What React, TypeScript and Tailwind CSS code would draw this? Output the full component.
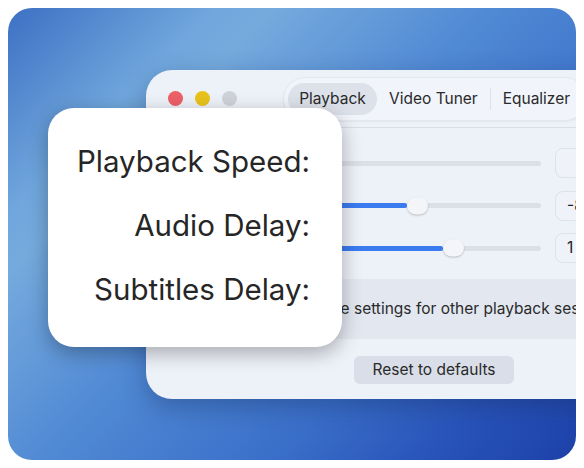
import { FC } from "react";

const font = { fontFamily: "Inter, 'Noto Sans', sans-serif" };

interface RowProps {
    fill: number;
    value: string;
    inset?: boolean;
}

// labels of these rows are shown enlarged in the white callout on top
const SliderRow: FC<RowProps> = ({ fill, value, inset }) => (
    <div className="flex h-[30px] items-center">
        <div className="w-[164px]" />
        <div className="relative flex h-[5px] w-[231px] items-center rounded-full bg-[#dcdfe6]">
            {fill > 0 && <div className="h-[5px] rounded-full bg-[#3a7bf0]" style={{ width: `${fill}px` }} />}
            <div
                className="absolute top-1/2 h-[17px] w-[21px] -translate-y-1/2 rounded-full bg-[#f3f5f9] shadow-[0_1px_2px_rgba(0,0,0,0.22)]"
                style={{ left: `${fill}px` }}
            />
        </div>
        <div
            className={`ml-[14px] flex h-[30px] w-[72px] items-center overflow-hidden whitespace-nowrap rounded-lg border border-[#dde1e8] bg-[#eff2f8] text-[15.5px] text-[#222] ${
                inset ? "pl-[30px]" : "pl-[11px]"
            }`}
        >
            {value}
        </div>
    </div>
);

const App: FC = () => {
    return (
        <div className="h-[468px] w-[584px] bg-white p-2" style={font}>
            <div className="relative h-[452px] w-[568px] overflow-hidden rounded-[24px] bg-[linear-gradient(135deg,#3d70c4_0%,#6fa6dc_20%,#75aadd_26%,#5089d4_48%,#3a6fc9_70%,#2954ba_85%,#1c41a8_100%)]">
                {/* app window */}
                <div className="absolute left-[138px] top-[62px] flex h-[329px] w-[576px] flex-col rounded-[26px] bg-[#edf1f8] shadow-[0_8px_24px_rgba(20,40,90,0.35)]">
                    <div className="flex h-[58px] shrink-0 items-center border-b border-[#d8dde6] pl-[22px]">
                        <div className="flex gap-[12px]">
                            <span className="size-[15px] rounded-full bg-[#ec6066]" />
                            <span className="size-[15px] rounded-full bg-[#e8c21c]" />
                            <span className="size-[15px] rounded-full bg-[#cfd2d7]" />
                        </div>
                        <div className="ml-[46px] flex h-[44px] items-center rounded-full border border-[#e3e7ef] bg-[#f1f4fa] px-[4px] text-[15.5px] text-[#2a2a2a] shadow-[0_1px_2px_rgba(0,0,0,0.05)]">
                            <div className="flex h-[32px] w-[89px] items-center justify-center rounded-full bg-[#dde1e9]">Playback</div>
                            <div className="whitespace-nowrap px-3">Video Tuner</div>
                            <div className="h-[22px] w-px bg-[#dde1e8]" />
                            <div className="whitespace-nowrap px-3">Equalizer</div>
                        </div>
                    </div>
                    <div className="flex flex-col gap-[12.5px] pt-[20px]">
                        <SliderRow fill={0} value="1.00x" inset />
                        <SliderRow fill={97} value="-80 ms" />
                        <SliderRow fill={133} value="1 ms" />
                    </div>
                    <div className="mt-[16px] flex h-[60px] items-center whitespace-nowrap bg-[#e3e7f0] pl-[108px] text-[15.5px] text-[#2a2a2a]">
                        <span className="mr-2 size-[14px] rounded border border-[#b9bfca] bg-white" />
                        Use these settings for other playback sessions
                    </div>
                    <div className="flex justify-center pt-[17px]">
                        <div className="flex h-[28px] w-[160px] items-center justify-center rounded-md bg-[#d9dee8] text-[15.5px] text-[#2a2a2a]">
                            Reset to defaults
                        </div>
                    </div>
                </div>

                {/* magnified labels */}
                <div className="absolute left-[40px] top-[100px] flex h-[239px] w-[294px] flex-col items-end justify-center gap-[26px] rounded-[26px] bg-white pb-[5px] pr-[32px] text-[29.5px] leading-[38px] text-[#262626] shadow-[0_6px_20px_rgba(0,0,0,0.3)]">
                    <div>Playback Speed:</div>
                    <div>Audio Delay:</div>
                    <div>Subtitles Delay:</div>
                </div>
            </div>
        </div>
    );
};

export default App;
